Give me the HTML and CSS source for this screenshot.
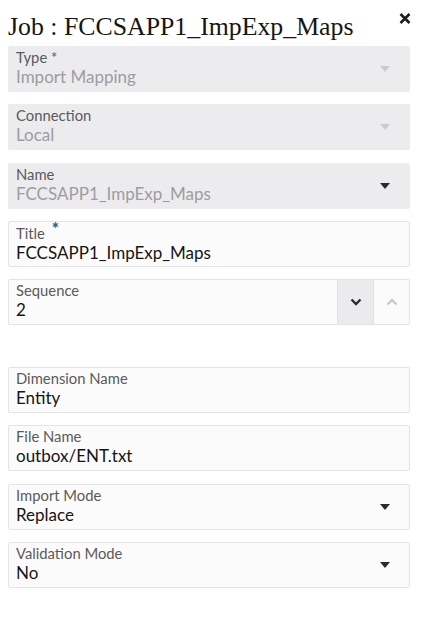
FILE: index.html
```html
<!DOCTYPE html>
<html>
<head>
<meta charset="utf-8">
<link rel="stylesheet" href="styles.css">
</head>
<body>
<div class="panel">
  <div class="header">
    <h1 class="title">Job : FCCSAPP1_ImpExp_Maps</h1>
    <span class="close"><svg width="12" height="11" viewBox="0 0 12 11"><path d="M1.5 1 L10.5 10 M10.5 1 L1.5 10" fill="none" stroke="#1d1d1d" stroke-width="2.6"/></svg></span>
  </div>
  <div class="form">
    <div class="field disabled">
      <div class="text">
        <div class="label">Type *</div>
        <div class="value">Import Mapping</div>
      </div>
      <span class="caret light"></span>
    </div>
    <div class="field disabled">
      <div class="text">
        <div class="label">Connection</div>
        <div class="value">Local</div>
      </div>
      <span class="caret light"></span>
    </div>
    <div class="field disabled">
      <div class="text">
        <div class="label">Name</div>
        <div class="value">FCCSAPP1_ImpExp_Maps</div>
      </div>
      <span class="caret"></span>
    </div>
    <div class="field">
      <div class="text">
        <div class="label">Title <span class="req">*</span></div>
        <div class="value">FCCSAPP1_ImpExp_Maps</div>
      </div>
    </div>
    <div class="field number">
      <div class="text">
        <div class="label">Sequence</div>
        <div class="value">2</div>
      </div>
      <div class="step down">
        <svg width="12" height="8" viewBox="0 0 12 8"><path d="M1.5 1.5 L6 6 L10.5 1.5" fill="none" stroke="#2b2b2b" stroke-width="2.4"/></svg>
      </div>
      <div class="step up">
        <svg width="12" height="8" viewBox="0 0 12 8"><path d="M1.5 6.5 L6 2 L10.5 6.5" fill="none" stroke="#c9c9c9" stroke-width="2.4"/></svg>
      </div>
    </div>
    <div class="spacer"></div>
    <div class="field">
      <div class="text">
        <div class="label">Dimension Name</div>
        <div class="value">Entity</div>
      </div>
    </div>
    <div class="field">
      <div class="text">
        <div class="label">File Name</div>
        <div class="value">outbox/ENT.txt</div>
      </div>
    </div>
    <div class="field">
      <div class="text">
        <div class="label">Import Mode</div>
        <div class="value">Replace</div>
      </div>
      <span class="caret"></span>
    </div>
    <div class="field">
      <div class="text">
        <div class="label">Validation Mode</div>
        <div class="value">No</div>
      </div>
      <span class="caret"></span>
    </div>
  </div>
</div>
</body>
</html>
```

FILE: styles.css
```css
html, body {
  margin: 0;
  padding: 0;
  background: #ffffff;
}
.panel {
  width: 402px;
  padding: 0 8px;
  font-family: Lato, "Open Sans", sans-serif;
}
.header {
  position: relative;
  height: 46px;
}
.title {
  margin: 0;
  padding-top: 12px;
  font-family: "Liberation Serif", serif;
  font-weight: normal;
  font-size: 25.8px;
  line-height: 30px;
  color: #161513;
}
.close {
  position: absolute;
  right: -1px;
  top: 13px;
  line-height: 0;
}
.form {
  display: flex;
  flex-direction: column;
  gap: 12.3px;
}
.field {
  box-sizing: border-box;
  height: 46px;
  border: 1px solid #e4e4e6;
  border-radius: 2px;
  background: #fbfbfc;
  display: flex;
  align-items: center;
}
.field.disabled {
  background: #ececee;
  border-color: #ececee;
}
.text {
  flex: 1;
  padding: 2px 7px 0;
  align-self: flex-start;
}
.label {
  font-size: 14.8px;
  line-height: 17px;
  color: #5a5a5a;
}
.value {
  font-size: 17px;
  line-height: 21px;
  color: #161513;
}
.disabled .value {
  color: #9d9d9d;
}
.req {
  color: #2a6496;
  font-weight: 900;
  font-size: 17px;
  position: relative;
  top: -4px;
  margin-left: 3px;
}
.caret {
  width: 0;
  height: 0;
  border-left: 5.5px solid transparent;
  border-right: 5.5px solid transparent;
  border-top: 6.5px solid #2b2b2b;
  margin-right: 19px;
}
.caret.light {
  border-top-color: #cbcbcd;
}
.step {
  width: 35px;
  height: 100%;
  display: flex;
  align-items: center;
  justify-content: center;
  border-left: 1px solid #e2e2e4;
}
.step.down {
  background: #ebebed;
}
.spacer {
  height: 17.4px;
}
```
